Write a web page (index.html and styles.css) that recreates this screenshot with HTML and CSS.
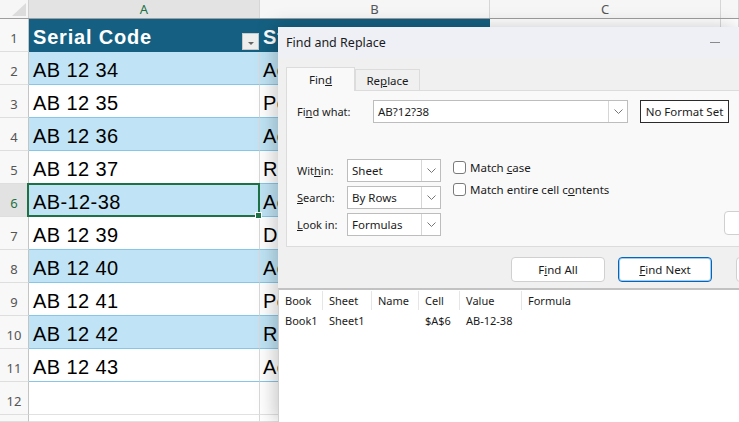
FILE: index.html
```html
<!DOCTYPE html>
<html lang="en">
  <head>
    <meta charset="UTF-8" />
    <meta name="viewport" content="width=device-width, initial-scale=1.0" />
    <title>Find and Replace</title>
    <link rel="stylesheet" href="styles.css">
  </head>
  <body>
    <div class="sheet">
      <div class="colhead">
        <div class="corner"><span class="corner-tri"></span></div>
        <div class="ch ch-sel">A</div>
        <div class="ch">B</div>
        <div class="ch">C</div>
        <div class="ch"></div>
      </div>

      <div class="row table-head">
        <div class="rn">1</div>
        <div class="cell">Serial Code<span class="filter"></span></div>
        <div class="cell">Status<span class="filter"></span></div>
        <div class="cell plain"></div>
        <div class="cell plain"></div>
      </div>
      <div class="row band">
        <div class="rn">2</div>
        <div class="cell">AB 12 34</div>
        <div class="cell">Active</div>
        <div class="cell plain"></div>
        <div class="cell plain"></div>
      </div>
      <div class="row">
        <div class="rn">3</div>
        <div class="cell">AB 12 35</div>
        <div class="cell">Pending</div>
        <div class="cell plain"></div>
        <div class="cell plain"></div>
      </div>
      <div class="row band">
        <div class="rn">4</div>
        <div class="cell">AB 12 36</div>
        <div class="cell">Active</div>
        <div class="cell plain"></div>
        <div class="cell plain"></div>
      </div>
      <div class="row">
        <div class="rn">5</div>
        <div class="cell">AB 12 37</div>
        <div class="cell">Returned</div>
        <div class="cell plain"></div>
        <div class="cell plain"></div>
      </div>
      <div class="row band">
        <div class="rn rn-sel">6</div>
        <div class="cell active">AB-12-38</div>
        <div class="cell">Active</div>
        <div class="cell plain"></div>
        <div class="cell plain"></div>
      </div>
      <div class="row">
        <div class="rn">7</div>
        <div class="cell">AB 12 39</div>
        <div class="cell">Damaged</div>
        <div class="cell plain"></div>
        <div class="cell plain"></div>
      </div>
      <div class="row band">
        <div class="rn">8</div>
        <div class="cell">AB 12 40</div>
        <div class="cell">Active</div>
        <div class="cell plain"></div>
        <div class="cell plain"></div>
      </div>
      <div class="row">
        <div class="rn">9</div>
        <div class="cell">AB 12 41</div>
        <div class="cell">Pending</div>
        <div class="cell plain"></div>
        <div class="cell plain"></div>
      </div>
      <div class="row band">
        <div class="rn">10</div>
        <div class="cell">AB 12 42</div>
        <div class="cell">Returned</div>
        <div class="cell plain"></div>
        <div class="cell plain"></div>
      </div>
      <div class="row">
        <div class="rn">11</div>
        <div class="cell">AB 12 43</div>
        <div class="cell">Active</div>
        <div class="cell plain"></div>
        <div class="cell plain"></div>
      </div>
      <div class="row">
        <div class="rn">12</div>
        <div class="cell plain"></div>
        <div class="cell plain"></div>
        <div class="cell plain"></div>
        <div class="cell plain"></div>
      </div>
      <div class="row row-cut">
        <div class="rn"></div>
        <div class="cell plain"></div>
        <div class="cell plain"></div>
        <div class="cell plain"></div>
        <div class="cell plain"></div>
      </div>
    </div>

    <!-- Find and Replace window, floating over the sheet -->
    <div class="dialog">
      <div class="titlebar">
        <span>Find and Replace</span>
        <span class="minimize"></span>
      </div>

      <div class="dlg-body">
        <div class="tabs">
          <div class="tab tab-active"><span>Fin<u>d</u></span></div>
          <div class="tab"><span>Re<u>p</u>lace</span></div>
        </div>

        <div class="panel">
          <div class="find-row">
            <span class="label-wide">Fi<u>n</u>d what:</span>
            <div class="combo combo-find">
              <span class="combo-text">AB?12?38</span>
              <span class="combo-arrow">
                <svg width="9" height="5" viewBox="0 0 9 5"><polyline points="0.5,0.5 4.5,4.5 8.5,0.5" fill="none" stroke="#777" stroke-width="1"/></svg>
              </span>
            </div>
            <button class="btn-format">No Format Set</button>
          </div>

          <div class="options">
            <div class="option-fields">
              <div class="field">
                <span class="label">Wit<u>h</u>in:</span>
                <div class="combo combo-small">
                  <span class="combo-text">Sheet</span>
                  <span class="combo-arrow">
                    <svg width="9" height="5" viewBox="0 0 9 5"><polyline points="0.5,0.5 4.5,4.5 8.5,0.5" fill="none" stroke="#777" stroke-width="1"/></svg>
                  </span>
                </div>
              </div>
              <div class="field">
                <span class="label"><u>S</u>earch:</span>
                <div class="combo combo-small">
                  <span class="combo-text">By Rows</span>
                  <span class="combo-arrow">
                    <svg width="9" height="5" viewBox="0 0 9 5"><polyline points="0.5,0.5 4.5,4.5 8.5,0.5" fill="none" stroke="#777" stroke-width="1"/></svg>
                  </span>
                </div>
              </div>
              <div class="field">
                <span class="label"><u>L</u>ook in:</span>
                <div class="combo combo-small">
                  <span class="combo-text">Formulas</span>
                  <span class="combo-arrow">
                    <svg width="9" height="5" viewBox="0 0 9 5"><polyline points="0.5,0.5 4.5,4.5 8.5,0.5" fill="none" stroke="#777" stroke-width="1"/></svg>
                  </span>
                </div>
              </div>
            </div>

            <div class="checks">
              <label class="check"><span class="box"></span><span>Match <u>c</u>ase</span></label>
              <label class="check"><span class="box"></span><span>Match entire cell c<u>o</u>ntents</span></label>
            </div>

            <!-- Options button, its label lies past the window edge -->
            <button class="btn btn-options" aria-label="Options"></button>
          </div>
        </div>

        <div class="actions">
          <button class="btn">F<u>i</u>nd All</button>
          <button class="btn btn-default"><u>F</u>ind Next</button>
          <button class="btn btn-close" aria-label="Close"></button>
        </div>
      </div>

      <div class="results">
        <div class="res-row res-head">
          <span>Book</span>
          <span>Sheet</span>
          <span>Name</span>
          <span>Cell</span>
          <span>Value</span>
          <span>Formula</span>
        </div>
        <div class="res-row">
          <span>Book1</span>
          <span>Sheet1</span>
          <span></span>
          <span>$A$6</span>
          <span>AB-12-38</span>
          <span></span>
        </div>
      </div>
    </div>
  </body>
</html>
```

FILE: styles.css
```css
body {
  margin: 0;
  width: 739px;
  height: 422px;
  overflow: hidden;
  position: relative;
  background: #fff;
  font-family: "Noto Sans", "Open Sans", sans-serif;
  color: #1b1b1b;
}

/* Spreadsheet grid */
.colhead,
.row {
  display: grid;
  grid-template-columns: 29px 231px 230px 231px 1fr;
}

.colhead {
  height: 19px;
  box-sizing: border-box;
  background: #f6f6f6;
  border-bottom: 1px solid #9e9e9e;
}

.corner {
  border-right: 1px solid #d0d0d0;
  position: relative;
}

.corner-tri {
  position: absolute;
  right: 2px;
  bottom: 2px;
  width: 0;
  height: 0;
  border-left: 14px solid transparent;
  border-bottom: 13px solid #dcdcdc;
}

.ch {
  border-right: 1px solid #d6d6d6;
  font-size: 13px;
  color: #555;
  display: flex;
  align-items: center;
  justify-content: center;
}

.ch-sel {
  background: #e3e3e3;
  color: #1e7145;
}

.row {
  height: 33px;
}

.row-cut {
  height: 7px;
}

.rn {
  box-sizing: border-box;
  border-right: 1px solid #c4c4c4;
  border-bottom: 1px solid #dedede;
  background: #f8f8f8;
  font-size: 13px;
  color: #555;
  display: flex;
  align-items: flex-end;
  justify-content: center;
  padding-bottom: 4px;
}

.rn-sel {
  background: #e2e2e2;
  color: #1e7145;
}

.cell {
  box-sizing: border-box;
  border-right: 1px solid #d9d9d9;
  border-bottom: 1px solid #86c6e7;
  font-family: "Liberation Sans", Arial, sans-serif;
  font-size: 20px;
  letter-spacing: 0.4px;
  color: #000;
  display: flex;
  align-items: flex-end;
  padding: 0 0 2px 4px;
  white-space: nowrap;
  overflow: hidden;
  background: #fff;
}

.cell + .cell {
  padding-left: 3px;
}

.cell.plain {
  border-bottom-color: #e1e1e1;
}

.band .cell {
  background: #c0e4f5;
}

.band .cell.plain,
.table-head .cell.plain {
  background: #fff;
}

.table-head .cell {
  background: #156082;
  color: #fff;
  font-weight: bold;
  letter-spacing: 0.8px;
  border-right-color: #156082;
  border-bottom-color: #156082;
}

.table-head .cell.plain {
  border-right-color: #d9d9d9;
  border-bottom-color: #e1e1e1;
}

.filter {
  margin-left: auto;
  width: 17px;
  height: 17px;
  box-sizing: border-box;
  background: #eeeeee;
  border: 1px solid #c8c8c8;
  position: relative;
  margin-bottom: -1px;
  flex-shrink: 0;
}

.filter::after {
  content: "";
  position: absolute;
  left: 5px;
  top: 8px;
  border-left: 3px solid transparent;
  border-right: 3px solid transparent;
  border-top: 3px solid #666;
}

.cell.active {
  position: relative;
  overflow: visible;
}

.cell.active::after {
  content: "";
  position: absolute;
  left: -2px;
  top: -1px;
  right: -1px;
  bottom: -1px;
  border: 2px solid #1e7145;
}

.cell.active::before {
  content: "";
  position: absolute;
  right: -3px;
  bottom: -3px;
  width: 5px;
  height: 5px;
  background: #1e7145;
  border: 1px solid #fff;
  z-index: 1;
}

/* Dialog */
.dialog {
  position: absolute;
  left: 278px;
  top: 27px;
  width: 461px;
  height: 395px;
  overflow: hidden;
  background: #f0f0f0;
  box-shadow: -4px 0 18px rgba(0, 0, 0, 0.22);
  display: flex;
  flex-direction: column;
  font-size: 11px;
}

.titlebar {
  height: 31px;
  flex-shrink: 0;
  background: #eef0f6;
  display: flex;
  align-items: center;
  justify-content: space-between;
  padding: 0 19px 0 8px;
  font-size: 12.5px;
  color: #1b1b1b;
}

.minimize {
  width: 10px;
  height: 1px;
  background: #8a8a8a;
}

.dlg-body {
  padding: 9px 0 0 8px;
}

.tabs {
  display: flex;
  align-items: flex-end;
}

.tab {
  box-sizing: border-box;
  height: 21px;
  width: 65px;
  border: 1px solid #dcdcdc;
  border-bottom: none;
  display: flex;
  align-items: center;
  justify-content: center;
  font-size: 11.5px;
}

.tab-active {
  width: 69px;
  height: 24px;
  background: #f9f9f9;
  margin-bottom: -1px;
  position: relative;
  z-index: 1;
}

.panel {
  box-sizing: border-box;
  height: 157px;
  background: #f9f9f9;
  border: 1px solid #dcdcdc;
  border-right: none;
  padding: 9px 0 0 10px;
}

.find-row {
  display: flex;
  align-items: center;
}

.find-row > *,
.options > *,
.actions > * {
  flex-shrink: 0;
}

.label-wide {
  width: 76px;
}

.combo {
  box-sizing: border-box;
  height: 23px;
  background: #fff;
  border: 1px solid #bdbdbd;
  display: flex;
  align-items: stretch;
}

.combo-find {
  width: 255px;
}

.combo-small {
  width: 94px;
}

.combo-text {
  flex: 1;
  display: flex;
  align-items: center;
  padding-left: 4px;
  font-size: 11.5px;
}

.combo-arrow {
  width: 18px;
  border-left: 1px solid #d6d6d6;
  display: flex;
  align-items: center;
  justify-content: center;
}

.btn-format {
  margin-left: 12px;
  width: 89px;
  height: 23px;
  box-sizing: border-box;
  background: #fff;
  border: 1px solid #2b2b2b;
  font-family: inherit;
  font-size: 11.5px;
  color: #1b1b1b;
  padding: 0;
}

.options {
  display: flex;
  margin-top: 36px;
}

.option-fields {
  display: flex;
  flex-direction: column;
  gap: 4px;
}

.field {
  display: flex;
  align-items: center;
}

.label {
  width: 50px;
}

.checks {
  width: 271px;
  margin-left: 12px;
  display: flex;
  flex-direction: column;
  gap: 7px;
  padding-top: 1px;
}

.check {
  display: flex;
  align-items: center;
  gap: 4px;
  font-size: 11.5px;
}

.box {
  width: 13px;
  height: 13px;
  box-sizing: border-box;
  border: 1px solid #7a7a7a;
  border-radius: 3px;
  background: #fff;
}

.btn {
  box-sizing: border-box;
  width: 94px;
  height: 25px;
  background: #fff;
  border: 1px solid #d0d0d0;
  border-radius: 4px;
  font-family: inherit;
  font-size: 11.5px;
  color: #1b1b1b;
  padding: 0;
}

.btn-options {
  margin-top: 52px;
  height: 24px;
}

.btn-default {
  border: 1px solid #0067c0;
  box-shadow: inset 0 0 0 1px rgba(0, 103, 192, 0.35);
}

.actions {
  display: flex;
  gap: 13px;
  margin-top: 10px;
  padding-left: 225px;
}

.btn-close {
  margin-left: 11px;
}

.results {
  flex: 1;
  margin-top: 6px;
  background: #fff;
  border-top: 2px solid #c2c2c2;
  border-left: 1px solid #cfcfcf;
}

.res-row {
  display: grid;
  grid-template-columns: 44px 49px 47px 41px 62px 1fr;
  height: 19px;
  align-items: center;
  font-size: 11px;
}

.res-row span {
  padding-left: 6px;
  white-space: nowrap;
}

.res-head {
  height: 21px;
}

.res-head span {
  border-right: 1px solid #e6e6e6;
  height: 19px;
  line-height: 19px;
}

.res-head span:last-child {
  border-right: none;
  border-left: 1px solid #e6e6e6;
  margin-left: -1px;
}
```
